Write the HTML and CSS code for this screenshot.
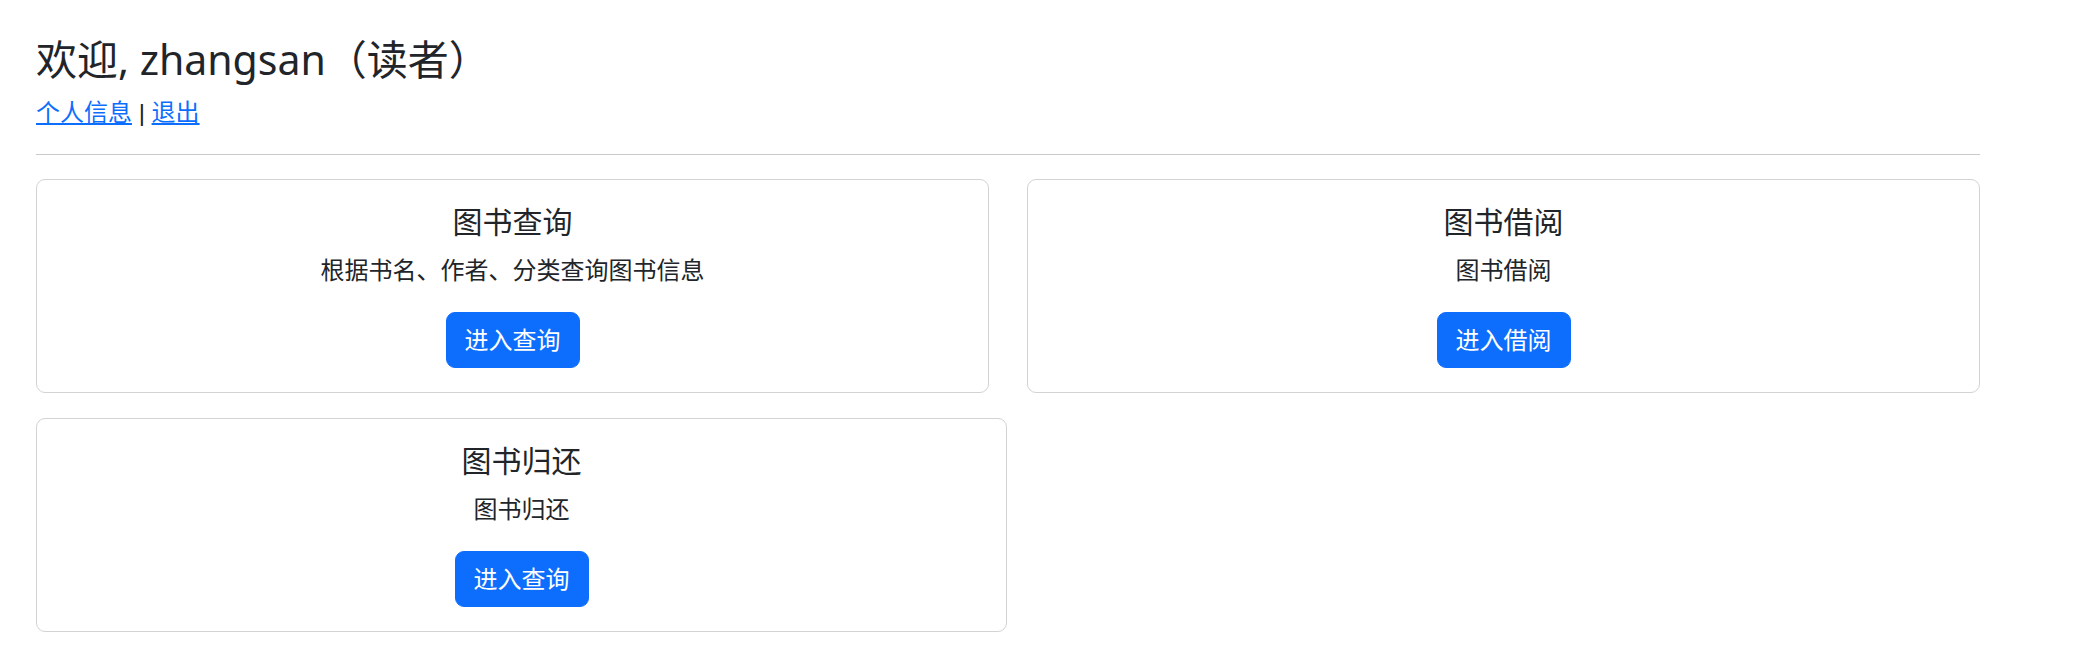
FILE: index.html
```html
<!DOCTYPE html>
<html lang="zh-CN">
<head>
    <meta charset="UTF-8">
    <meta name="viewport" content="width=device-width, initial-scale=1.0">
    <title>读者首页</title>
    <link rel="stylesheet" href="styles.css">
</head>
<body>
    <div class="page">
        <h1 class="welcome">欢迎, zhangsan（读者）</h1>
        <div class="user-links">
            <a href="#">个人信息</a><span class="sep"> | </span><a href="#">退出</a>
        </div>
        <hr class="divider">

        <div class="card-row">
            <div class="card">
                <h5 class="card-title">图书查询</h5>
                <p class="card-text">根据书名、作者、分类查询图书信息</p>
                <a href="#" class="btn">进入查询</a>
            </div>
            <div class="card">
                <h5 class="card-title">图书借阅</h5>
                <p class="card-text">图书借阅</p>
                <a href="#" class="btn">进入借阅</a>
            </div>
        </div>

        <div class="card-row">
            <div class="card wide">
                <h5 class="card-title">图书归还</h5>
                <p class="card-text">图书归还</p>
                <a href="#" class="btn">进入查询</a>
            </div>
        </div>
    </div>
</body>
</html>
```

FILE: styles.css
```css
body {
    margin: 0;
    font-family: "Noto Sans", "Noto Sans CJK SC", sans-serif;
    font-size: 24px;
    line-height: 1.5;
    color: #212529;
    background-color: #fff;
}

.page {
    width: 1944px;
    padding-left: 36px;
}

.welcome {
    margin: 34px 0 0;
    font-size: 41px;
    font-weight: 400;
    line-height: 50px;
}

.user-links {
    height: 36px;
    margin-top: 10px;
    line-height: 36px;
}

.user-links a {
    color: #0d6efd;
    text-decoration: underline;
}

.sep {
    font-family: "Liberation Sans", sans-serif;
}

.divider {
    margin: 24px 0;
    border: 0;
    border-top: 1px solid #c8c9ca;
}

.card-row {
    display: flex;
    gap: 38px;
    margin-bottom: 25px;
}

.card {
    flex: 0 0 953px;
    box-sizing: border-box;
    padding: 24px;
    border: 1px solid #d3d3d3;
    border-radius: 9px;
    text-align: center;
}

.card.wide {
    flex-basis: 971px;
}

.card-title {
    margin: 0 0 12px;
    font-size: 30px;
    font-weight: 400;
    line-height: 36px;
}

.card-text {
    margin: 0 0 24px;
    line-height: 36px;
}

.btn {
    display: inline-block;
    padding: 9px 18px;
    border: 1px solid #0d6efd;
    border-radius: 9px;
    background-color: #0d6efd;
    color: #fff;
    font-size: 24px;
    line-height: 36px;
    text-decoration: none;
}
```
